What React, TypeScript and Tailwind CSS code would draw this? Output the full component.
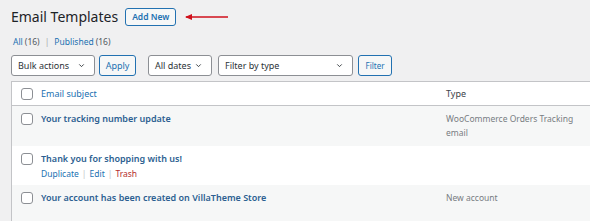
import React from "react";

const rows = [
  { title: "Your tracking number update", type: ["WooCommerce Orders Tracking", "email"], actions: false },
  { title: "Thank you for shopping with us!", type: [], actions: true },
  { title: "Your account has been created on VillaTheme Store", type: ["New account"], actions: false },
];

const Chevron = () => (
  <svg width="9" height="9" viewBox="0 0 20 20" className="shrink-0">
    <path d="M5 7.5l5 5 5-5" fill="none" stroke="#2c3338" strokeWidth="2" />
  </svg>
);

const Select = ({ label, width }: { label: string; width: string }) => (
  <div
    className={`flex h-[21px] items-center justify-between whitespace-nowrap rounded-[3px] border border-[#8c8f94] bg-white pl-[6px] pr-[8px] text-[9px] text-[#2c3338] ${width}`}
  >
    <span>{label}</span>
    <Chevron />
  </div>
);

const Checkbox = () => (
  <span className="block h-[12px] w-[12px] rounded-[3px] border border-[#8c8f94] bg-white" />
);

export default function App() {
  return (
    <div className="h-[221px] w-[590px] overflow-hidden bg-[#f0f0f1] pl-[11px] font-['Noto_Sans',sans-serif]">
      <div className="flex items-center pt-[7px]">
        <h1 className="text-[14px] leading-[20px] text-[#1d2327]">Email Templates</h1>
        <button className="ml-[7px] h-[18px] rounded-[3px] border border-[#2271b1] bg-[#f6f7f7] px-[6px] text-[8.5px] font-semibold leading-none text-[#2271b1]">
          Add New
        </button>
        <svg width="44" height="8" viewBox="0 0 44 8" className="ml-[9px]">
          <path d="M1 4H43" stroke="#d0101b" strokeWidth="1.6" />
          <path d="M0 4L7 1V7Z" fill="#d0101b" />
        </svg>
      </div>

      <div className="mt-[9px] flex items-center text-[8.5px] leading-[12px] text-[#50575e]">
        <span className="ml-[2px] text-[#2271b1]">All</span>
        <span className="ml-[2px]">(16)</span>
        <span className="mx-[5px] text-[#a7aaad]">|</span>
        <span className="text-[#2271b1]">Published</span>
        <span className="ml-[2px]">(16)</span>
      </div>

      <div className="mt-[7px] flex items-center">
        <Select label="Bulk actions" width="w-[84px]" />
        <button className="ml-[4px] h-[21px] w-[37px] rounded-[3px] border border-[#2271b1] bg-[#f6f7f7] text-[9px] text-[#2271b1]">
          Apply
        </button>
        <div className="ml-[12px]">
          <Select label="All dates" width="w-[64px]" />
        </div>
        <div className="ml-[6px]">
          <Select label="Filter by type" width="w-[135px]" />
        </div>
        <button className="ml-[5px] h-[21px] w-[34px] rounded-[3px] border border-[#2271b1] bg-[#f6f7f7] text-[8px] text-[#2271b1]">
          Filter
        </button>
      </div>

      <div className="mt-[5px] w-[600px] border-l border-t border-[#c3c4c7] bg-white">
        <div className="flex h-[24px] items-center border-b border-[#c3c4c7] text-[9px] text-[#2271b1]">
          <div className="flex w-[28px] justify-center pl-[2px]">
            <Checkbox />
          </div>
          <div className="w-[406px] pl-[1px]">Email subject</div>
          <div className="text-[#3c434a]">Type</div>
        </div>
        {rows.map((r, i) => (
          <div
            key={r.title}
            className={`flex h-[39.5px] items-start pt-[6px] ${i % 2 === 0 ? "bg-[#f6f7f7]" : "bg-white"}`}
          >
            <div className="flex w-[28px] justify-center pl-[2px] pt-[1px]">
              <Checkbox />
            </div>
            <div className="w-[406px] pl-[1px]">
              <div className="text-[9px] font-semibold leading-[14px] text-[#2c5f91]">{r.title}</div>
              {r.actions && (
                <div className="mt-[2px] flex items-center text-[8.5px] leading-[12px] text-[#2271b1]">
                  <span>Duplicate</span>
                  <span className="mx-[3px] text-[#c3c4c7]">|</span>
                  <span>Edit</span>
                  <span className="mx-[3px] text-[#c3c4c7]">|</span>
                  <span className="text-[#b32d2e]">Trash</span>
                </div>
              )}
            </div>
            <div className="text-[8.5px] leading-[14px] text-[#787c82]">
              {r.type.map((t) => (
                <div key={t}>{t}</div>
              ))}
            </div>
          </div>
        ))}
      </div>
    </div>
  );
}
